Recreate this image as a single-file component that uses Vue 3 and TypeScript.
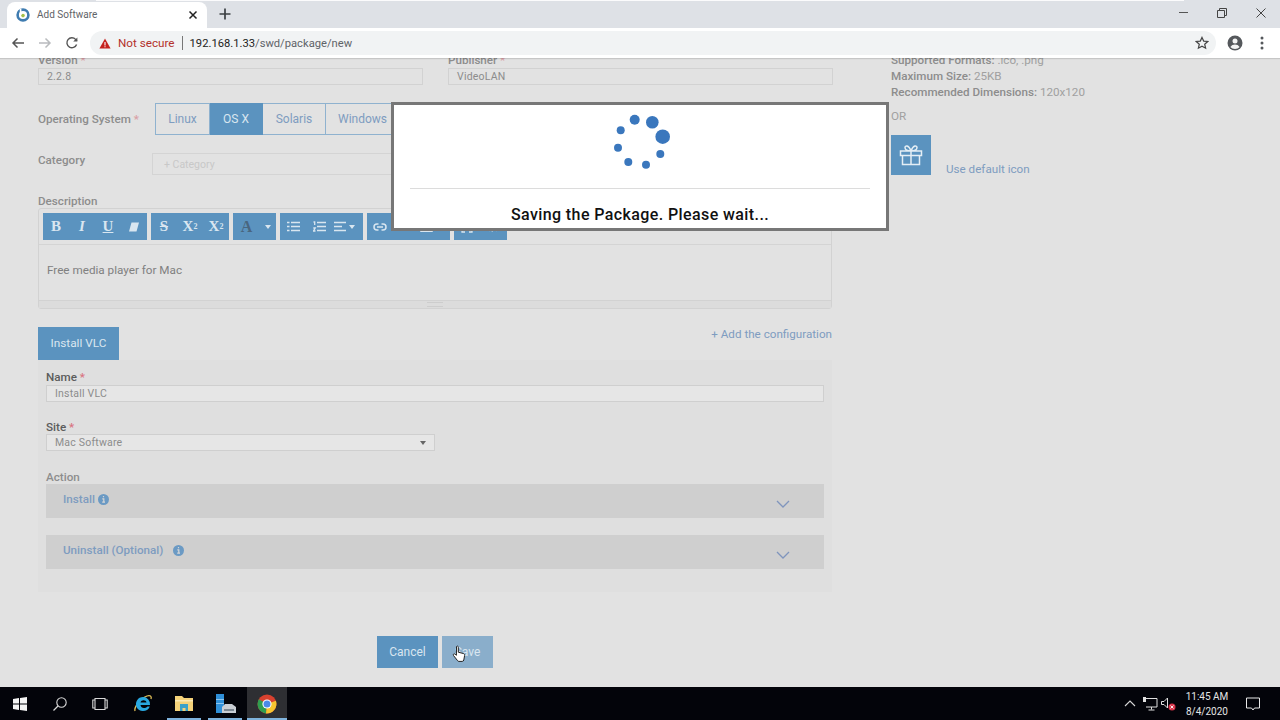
<script setup lang="ts">
const osOptions = [
  { name: "Linux", width: 55 },
  { name: "OS X", width: 53, active: true },
  { name: "Solaris", width: 63 },
  { name: "Windows", width: 74 },
  { name: "Others", width: 55 },
];

const actions = [
  { name: "Install", gap: "3px" },
  { name: "Uninstall (Optional)", gap: "10px" },
];

const spinnerDots = [
  { x: 634.7, y: 119.7, r: 5 },
  { x: 652.3, y: 122.3, r: 6.3 },
  { x: 662.7, y: 136.7, r: 7.3 },
  { x: 660.3, y: 154, r: 4 },
  { x: 646, y: 164.7, r: 4 },
  { x: 628.3, y: 162, r: 4 },
  { x: 618, y: 147.7, r: 4 },
  { x: 620.7, y: 130.3, r: 4 },
];
</script>

<template>
  <div class="screen">
    <header class="tabstrip">
      <div class="tab">
        <svg class="favicon" viewBox="0 0 14 14" width="14" height="14">
          <circle cx="7" cy="7" r="5.4" fill="none" stroke="#3f7cb0" stroke-width="2.6" />
          <circle cx="7" cy="7.6" r="1.8" fill="#a5c04a" />
          <path d="M4.6 1v6" stroke="#fff" stroke-width="1.6" />
        </svg>
        <span class="tab-title">Add Software</span>
        <svg class="tab-close" viewBox="0 0 10 10" width="10" height="10">
          <path d="M1.5 1.5l7 7M8.5 1.5l-7 7" stroke="#222" stroke-width="1.5" />
        </svg>
      </div>
      <svg class="new-tab" viewBox="0 0 12 12" width="12" height="12">
        <path d="M6 .5v11M.5 6h11" stroke="#3c4043" stroke-width="1.7" />
      </svg>
      <div class="window-buttons">
        <svg viewBox="0 0 12 12" width="12" height="12"><path d="M2 5.500h9" stroke="#555" /></svg>
        <svg viewBox="0 0 12 12" width="12" height="12">
          <path d="M1.5 3.5h7v7h-7zM3.5 3.5v-2h7v7h-2" fill="none" stroke="#444" />
        </svg>
        <svg viewBox="0 0 12 12" width="12" height="12"><path d="M1.5 1.5l9 9M10.5 1.5l-9 9" stroke="#444" /></svg>
      </div>
    </header>

    <nav class="addressbar">
      <svg viewBox="0 0 14 14" width="14" height="14">
        <path d="M13 7H2M6.5 2.5L2 7l4.5 4.5" fill="none" stroke="#555" stroke-width="1.5" />
      </svg>
      <svg viewBox="0 0 14 14" width="14" height="14">
        <path d="M1 7h11M7.5 2.5L12 7l-4.5 4.5" fill="none" stroke="#b9bbbe" stroke-width="1.5" />
      </svg>
      <svg viewBox="0 0 14 14" width="14" height="14">
        <path d="M11.6 8.5A5 5 0 1 1 10.6 3.4L12 4.8" fill="none" stroke="#555" stroke-width="1.4" />
        <path d="M12.4 1.4v4.2H8.2z" fill="#555" />
      </svg>
      <div class="omnibox">
        <svg viewBox="0 0 12 11" width="12" height="11">
          <path d="M6 .5l5.6 10H.4z" fill="#c5221f" />
          <path d="M6 4v3.4M6 8.2v1" stroke="#fff" stroke-width="1.1" />
        </svg>
        <span class="not-secure">Not secure</span>
        <span class="omni-sep"></span>
        <span class="url">192.168.1.33<span class="url-path">/swd/package/new</span></span>
        <svg class="star" viewBox="0 0 14 14" width="14" height="14">
          <path d="M7 1.4l1.7 3.7 4 .4-3 2.7.9 4L7 10.2l-3.6 2 .9-4-3-2.7 4-.4z" fill="none" stroke="#444" stroke-width="1.2" />
        </svg>
      </div>
      <svg class="account" viewBox="0 0 16 16" width="16" height="16">
        <circle cx="8" cy="8" r="7.5" fill="#55585c" />
        <circle cx="8" cy="6" r="2.5" fill="#f4f4f4" />
        <path d="M3.4 12c1-1.900 2.800-2.600 4.600-2.600s3.600.7 4.600 2.600C11.500 13.300 9.800 14 8 14s-3.500-.7-4.600-2z" fill="#f4f4f4" />
      </svg>
      <svg class="kebab" viewBox="0 0 4 14" width="4" height="14">
        <circle cx="2" cy="2" r="1.500" fill="#55585c" />
        <circle cx="2" cy="7" r="1.500" fill="#55585c" />
        <circle cx="2" cy="12" r="1.500" fill="#55585c" />
      </svg>
    </nav>

    <main class="page">
      <div class="content">
        <section class="form">
          <div class="two-cols">
            <div>
              <label class="label">Version <i>*</i></label>
              <div class="input">2.2.8</div>
            </div>
            <div>
              <label class="label">Publisher <i>*</i></label>
              <div class="input">VideoLAN</div>
            </div>
          </div>

          <div class="os-row">
            <label class="label os-label">Operating System <i>*</i></label>
            <div class="os-buttons">
              <span
                v-for="os in osOptions"
                :key="os.name"
                class="os-btn"
                :class="{ 'os-btn--active': os.active }"
                :style="{ width: os.width + 'px' }"
              >{{ os.name }}</span>
            </div>
          </div>

          <div class="category-row">
            <label class="label category-label">Category</label>
            <div class="category-input">+ Category</div>
          </div>

          <label class="label description-label">Description</label>
          <div class="editor">
            <div class="toolbar">
              <div class="tool-group">
                <span class="tool tool-text bold-serif">B</span>
                <span class="tool tool-text italic-serif">I</span>
                <span class="tool tool-text underline-serif">U</span>
                <span class="tool">
                  <svg viewBox="0 0 12 10" width="12" height="10"><path d="M3.500.5H11L8.500 9.500H1z" fill="#d9e6f0" /></svg>
                </span>
              </div>
              <div class="tool-group">
                <span class="tool tool-text strike-serif">S</span>
                <span class="tool tool-text bold-serif">X<sup>2</sup></span>
                <span class="tool tool-text bold-serif">X<sub>2</sub></span>
              </div>
              <div class="tool-group">
                <span class="tool tool-text bold-serif tool-a">A</span>
                <span class="tool tool-caret"><b class="caret"></b></span>
              </div>
              <div class="tool-group">
                <span class="tool">
                  <svg viewBox="0 0 13 11" width="13" height="11">
                    <path d="M0 1.500h2.500M0 5.500h2.500M0 9.500h2.500M4 1.500h9M4 5.500h9M4 9.500h9" stroke="#d9e6f0" stroke-width="1.700" />
                  </svg>
                </span>
                <span class="tool">
                  <svg viewBox="0 0 13 11" width="13" height="11">
                    <path d="M4 1.500h9M4 5.500h9M4 9.500h9M.5 1h1.200v3M.3 7h2L.5 10h2" fill="none" stroke="#d9e6f0" stroke-width="1.300" />
                  </svg>
                </span>
                <span class="tool tool-align">
                  <svg viewBox="0 0 12 11" width="12" height="11">
                    <path d="M0 1.500h12M0 5.500h8M0 9.500h12" stroke="#d9e6f0" stroke-width="1.700" />
                  </svg>
                  <b class="caret caret--small"></b>
                </span>
              </div>
              <div class="tool-group">
                <span class="tool">
                  <svg viewBox="0 0 14 8" width="14" height="8">
                    <path d="M5.500 1H4a3 3 0 0 0 0 6h1.500M8.500 1H10a3 3 0 0 1 0 6H8.500M4 4h6" fill="none" stroke="#d9e6f0" stroke-width="1.500" />
                  </svg>
                </span>
                <span class="tool tool--gap"></span>
                <span class="tool tool--table">
                  <svg viewBox="0 0 13 11" width="13" height="11">
                    <path d="M.5.5h12v10H.5zM.5 7h12M4.500 3v7.500M8.500 3v7.500" fill="none" stroke="#d9e6f0" />
                  </svg>
                </span>
              </div>
              <div class="tool-group tool-group--last">
                <span class="tool">
                  <svg viewBox="0 0 12 12" width="12" height="12">
                    <path d="M1 4V1h3M8 1h3v3M1 8v3h3M8 11h3V8" fill="none" stroke="#d9e6f0" stroke-width="1.300" />
                  </svg>
                </span>
                <span class="tool">
                  <svg viewBox="0 0 14 10" width="14" height="10">
                    <path d="M4 1L1 5l3 4M10 1l3 4-3 4M8 .5L6 9.500" fill="none" stroke="#d9e6f0" stroke-width="1.200" />
                  </svg>
                </span>
              </div>
            </div>
            <div class="editor-body">Free media player for Mac</div>
            <div class="editor-resize"><span></span></div>
          </div>

          <div class="config-head">
            <span class="config-tab">Install VLC</span>
            <a class="link add-config">+ Add the configuration</a>
          </div>

          <div class="config-panel">
            <label class="label label--dark">Name <i>*</i></label>
            <div class="input input--light">Install VLC</div>

            <label class="label label--dark site-label">Site <i>*</i></label>
            <div class="input input--light select">
              <span>Mac Software</span>
              <b class="caret caret--dark"></b>
            </div>

            <label class="label action-label">Action</label>
            <div v-for="action in actions" :key="action.name" class="action-bar">
              <span class="link action-name">{{ action.name }}</span>
              <svg
                class="info"
                :style="{ marginLeft: action.gap }"
                viewBox="0 0 11 11"
                width="11"
                height="11"
              >
                <circle cx="5.500" cy="5.500" r="5.500" fill="#6b9ac4" />
                <path d="M5.500 2v1.300M4.300 4.800h1.500v3M4.200 8.200h2.800" fill="none" stroke="#d6d6d6" stroke-width="1.200" />
              </svg>
              <svg class="chevron" viewBox="0 0 14 8" width="14" height="8">
                <path d="M1 1l6 6 6-6" fill="none" stroke="#7f95bd" stroke-width="1.300" />
              </svg>
            </div>
          </div>

          <div class="actions">
            <span class="btn btn-cancel">Cancel</span>
            <span class="btn btn-save">Save</span>
            <svg class="cursor" viewBox="0 0 14 17" width="14" height="17">
              <path d="M4.500 1.500c.8-.8 1.800-.3 1.800.7v5l5 1.300c1 .3 1.500 1 1.300 2l-.8 4.500c-.1.800-.8 1.400-1.600 1.400H7c-.6 0-1.100-.3-1.500-.8L1.500 10.500c-.8-1.200.6-2.200 1.600-1.300l1.300 1.100z" fill="#fff" stroke="#222" stroke-width="1" />
            </svg>
          </div>
        </section>

        <aside class="side">
          <p><b>Supported Formats:</b> .ico, .png</p>
          <p><b>Maximum Size:</b> 25KB</p>
          <p><b>Recommended Dimensions:</b> 120x120</p>
          <p class="or">OR</p>
          <div class="icon-row">
            <span class="gift">
              <svg viewBox="0 0 24 22" width="24" height="22">
                <path d="M1.500 7h21v4.500h-21zM3.500 11.500v9h17v-9M12 7v13.500M12 7C8 7 6 5.500 6 3.500S9.500 0.500 12 7c2.500-6.500 6-5.500 6-3.500S16 7 12 7z" fill="none" stroke="#e4eef5" stroke-width="1.500" />
              </svg>
            </span>
            <a class="link default-icon">Use default icon</a>
          </div>
        </aside>
      </div>

      <div class="modal">
        <svg class="spinner" viewBox="610 110 60 62" width="60" height="62">
          <circle v-for="(dot, i) in spinnerDots" :key="i" :cx="dot.x" :cy="dot.y" :r="dot.r" fill="#3a77bd" />
        </svg>
        <div class="modal-line"></div>
        <div class="modal-text">Saving the Package. Please wait...</div>
      </div>
    </main>

    <footer class="taskbar">
      <span class="task">
        <svg viewBox="0 0 14 14" width="14" height="14">
          <path d="M0 2l6-.9v5.500H0zM7 1l7-1v6.600H7zM0 7.400h6V13l-6-.9zM7 7.400h7V14l-7-1z" fill="#f4f4f4" />
        </svg>
      </span>
      <span class="task">
        <svg viewBox="0 0 16 16" width="16" height="16">
          <circle cx="9.500" cy="6.500" r="4.700" fill="none" stroke="#d8d8d8" stroke-width="1.100" />
          <path d="M6 10L1.500 14.500" stroke="#d8d8d8" stroke-width="1.300" />
        </svg>
      </span>
      <span class="task">
        <svg viewBox="0 0 16 14" width="16" height="14">
          <path d="M3 1.500h10v11H3zM3 3H.8v8H3M13 3h2.200v8H13" fill="none" stroke="#d8d8d8" stroke-width="1.100" />
        </svg>
      </span>
      <span class="task task--ie">
        <svg viewBox="0 0 20 20" width="20" height="20">
          <path d="M2 17C1 14 6 5 14 2c3-1 5 0 4 3" fill="none" stroke="#e4c25a" stroke-width="1.300" />
          <path d="M10 3a7 7 0 0 1 7 8H7.500c.3 3.500 4.500 4 7 1.500h2.300C15 18 6 19 3.500 13 1.500 8 5 3 10 3zM7.500 8.500h6c-.3-3-5.500-3-6 0z" fill="#29a9e1" />
        </svg>
      </span>
      <span class="task task--open">
        <svg viewBox="0 0 20 17" width="20" height="17">
          <path d="M1 1h7l2 2h9v13H1z" fill="#f4d27a" />
          <path d="M1 5h18v1.500H1z" fill="#fbe9b3" />
          <path d="M6 9h8v7h-2.500v-3h-3v3H6z" fill="#3ba1c8" />
        </svg>
      </span>
      <span class="task task--open">
        <svg viewBox="0 0 22 20" width="22" height="20">
          <path d="M2 0h8v19H2z" fill="#2f8fd8" />
          <path d="M2 5h8v1H2zM2 9h8v1H2z" fill="#8cc6ef" />
          <path d="M8 13l3-3h7l4 3v6H8z" fill="#c9ced4" />
          <path d="M10 15h10v2H10z" fill="#7c8791" />
        </svg>
      </span>
      <span class="task task--open task--active">
        <svg viewBox="0 0 20 20" width="20" height="20">
          <circle cx="10" cy="10" r="9.500" fill="#d8412f" />
          <path d="M10 10L1.800 5.200A9.500 9.500 0 0 0 9 19.400z" fill="#2f9e4f" />
          <path d="M10 10l8.900-3.200A9.500 9.500 0 0 1 9 19.400z" fill="#f6c531" />
          <circle cx="10" cy="10" r="4.600" fill="#fff" />
          <circle cx="10" cy="10" r="3.500" fill="#4a8ae8" />
        </svg>
      </span>

      <div class="tray">
        <span class="tray-item">
          <svg viewBox="0 0 12 7" width="12" height="7"><path d="M1 6l5-5 5 5" fill="none" stroke="#d8d8d8" stroke-width="1.100" /></svg>
        </span>
        <span class="tray-item">
          <svg viewBox="0 0 15 14" width="15" height="14">
            <path d="M3 1.500h11v8.500H3M8.500 10v2.500M5.500 13h6" fill="none" stroke="#e0e0e0" stroke-width="1" />
            <path d="M0 0h3v5H0z" fill="#e0e0e0" />
          </svg>
        </span>
        <span class="tray-item tray-item--sound">
          <svg viewBox="0 0 16 14" width="16" height="14">
            <path d="M.5 4.500h2.500L6.500 1v10L3 7.500H.5z" fill="none" stroke="#e0e0e0" stroke-width="1" />
            <circle cx="11" cy="10" r="3.500" fill="#d8344a" />
            <path d="M9.500 8.500l3 3M12.500 8.500l-3 3" stroke="#fff" stroke-width=".9" />
          </svg>
        </span>
        <span class="clock">11:45 AM<br />8/4/2020</span>
        <span class="tray-item tray-item--notify">
          <svg viewBox="0 0 14 14" width="14" height="14">
            <path d="M.5 1h13v10H8.500L7 13l-1.500-2h-5z" fill="none" stroke="#e8e8e8" stroke-width="1" />
          </svg>
        </span>
      </div>
    </footer>
  </div>
</template>

<style>
html,
body {
  margin: 0;
  background: #e2e2e2;
}
</style>

<style scoped>
.screen {
  width: 1280px;
  height: 720px;
  display: flex;
  flex-direction: column;
  overflow: hidden;
  font-family: Roboto, "Liberation Sans", sans-serif;
  font-size: 11.650px;
}

/* browser chrome */
.tabstrip {
  position: relative;
  height: 28px;
  flex: none;
  display: flex;
  align-items: center;
  background: #dee1e6;
}

.tabstrip::before {
  content: "";
  position: absolute;
  top: 0;
  left: 96px;
  width: 1088px;
  height: 1px;
  background: #fbfbfc;
}

.tab {
  position: relative;
  width: 200px;
  height: 26px;
  margin: 2px 0 0 7px;
  padding: 0 9px;
  box-sizing: border-box;
  display: flex;
  align-items: center;
  background: #fff;
  border-radius: 8px 8px 0 0;
}

.tab-title {
  margin-left: 7px;
  margin-top: -2px;
  color: #5f6368;
  font-size: 10px;
  flex: 1;
}

.new-tab {
  margin-left: 12px;
}

.window-buttons {
  margin-left: auto;
  margin-right: 13px;
  display: flex;
  gap: 27px;
  margin-top: -3px;
}

.addressbar {
  height: 30px;
  flex: none;
  display: flex;
  align-items: center;
  background: #fff;
  padding-left: 11px;
  box-sizing: border-box;
  gap: 13px;
  box-shadow: 0 1px 1px rgba(0, 0, 0, 0.12);
  position: relative;
  z-index: 2;
}

.omnibox {
  width: 1126px;
  height: 24px;
  margin-left: -2px;
  padding: 0 7px 0 9px;
  box-sizing: border-box;
  display: flex;
  align-items: center;
  background: #f1f3f4;
  border-radius: 12px;
}

.not-secure {
  margin-left: 7px;
  color: #b3312c;
  font-size: 11.700px;
}

.omni-sep {
  width: 1px;
  height: 14px;
  margin: 0 7px;
  background: #777;
}

.url {
  color: #222;
  font-size: 11.200px;
}

.url-path {
  color: #5f6368;
}

.star {
  margin-left: auto;
}

.account {
  margin-left: -2px;
}

.kebab {
  margin-left: 4px;
}

/* page */
.page {
  position: relative;
  flex: 1;
  min-height: 0;
  overflow: hidden;
  background: #e2e2e2;
}

.content {
  display: grid;
  grid-template-columns: 794px 300px;
  column-gap: 59px;
  padding-left: 38px;
  margin-top: -5px;
}

.label {
  display: block;
  height: 14px;
  line-height: 14px;
  color: #8d8d8d;
  font-weight: 500;
}

.label i {
  color: #d9a0a6;
  font-style: normal;
}

.label--dark {
  color: #5c5c5c;
}

.label--dark i {
  color: #d9737f;
}

.input {
  height: 17px;
  line-height: 15px;
  box-sizing: border-box;
  margin-top: 1px;
  padding: 0 8px;
  border: 1px solid #d2d2d2;
  color: #8c8c8c;
  font-size: 10.500px;
  letter-spacing: 0.2px;
}

.input--light {
  background: #e6e6e6;
  border-color: #cfcfcf;
}

.two-cols {
  display: grid;
  grid-template-columns: 385px 385px;
  column-gap: 25px;
}

.os-row {
  display: flex;
  align-items: center;
  margin-top: 18px;
}

.os-label {
  width: 117px;
}

.os-buttons {
  display: flex;
}

.os-btn {
  height: 32px;
  line-height: 30px;
  box-sizing: border-box;
  text-align: center;
  border: 1px solid #8fb2cf;
  color: #7e9cc0;
  font-size: 12px;
}

.os-btn + .os-btn {
  border-left: 0;
}

.os-btn--active {
  background: #5b93bf;
  border-color: #5b93bf;
  color: #d9e6f0;
}

.category-row {
  display: flex;
  margin-top: 18px;
  height: 22px;
}

.category-label {
  width: 114px;
}

.category-input {
  flex: 1;
  line-height: 21px;
  padding-left: 11px;
  border: 1px solid #d4d4d4;
  color: #c8c8c8;
  font-size: 10.500px;
}

.description-label {
  margin-top: 19px;
}

.editor {
  height: 101px;
  box-sizing: border-box;
  display: flex;
  flex-direction: column;
  border: 1px solid #d2d2d2;
  border-radius: 3px;
}

.toolbar {
  height: 36px;
  flex: none;
  box-sizing: border-box;
  padding: 4px 0 0 4px;
  display: flex;
  gap: 4px;
  border-bottom: 1px solid #d4d4d4;
}

.tool-group {
  height: 27px;
  display: flex;
  align-items: center;
  background: #5b93bf;
}

.tool-group--last {
  width: 53px;
}

.tool {
  width: 26px;
  height: 27px;
  flex: none;
  display: flex;
  align-items: center;
  justify-content: center;
  color: #d9e6f0;
}

.tool--gap {
  width: 20px;
}

.tool--table {
  width: 37px;
  justify-content: flex-start;
  padding-left: 7px;
  box-sizing: border-box;
}

.tool-text {
  font-family: "Liberation Serif", serif;
  font-size: 15px;
}

.tool-text sup,
.tool-text sub {
  font-size: 8px;
  line-height: 0;
}

.bold-serif {
  font-weight: 700;
}

.italic-serif {
  font-style: italic;
  font-weight: 700;
}

.underline-serif {
  font-weight: 700;
  text-decoration: underline;
}

.strike-serif {
  font-weight: 700;
  text-decoration: line-through;
}

.tool-a {
  width: 27px;
  color: #49667f;
  font-size: 16px;
}

.tool-caret {
  width: 16px;
}

.tool-align {
  width: 31px;
  box-sizing: border-box;
  justify-content: flex-start;
  padding-left: 2px;
  gap: 3px;
}

.caret {
  width: 0;
  height: 0;
  border-left: 3.500px solid transparent;
  border-right: 3.500px solid transparent;
  border-top: 4px solid #d9e6f0;
}

.caret--small {
  border-left-width: 3px;
  border-right-width: 3px;
}

.caret--dark {
  margin-left: auto;
  border-top-color: #666;
}

.editor-body {
  flex: 1;
  padding: 18px 8px 0;
  color: #808080;
  font-size: 11.700px;
}

.editor-resize {
  height: 7px;
  display: flex;
  justify-content: center;
  align-items: center;
  background: #dcdcdc;
  border-top: 1px solid #d2d2d2;
}

.editor-resize span {
  width: 16px;
  height: 3px;
  border-top: 1px solid #cdcdcd;
  border-bottom: 1px solid #cdcdcd;
}

.config-head {
  display: flex;
  justify-content: space-between;
  margin-top: 18px;
  height: 33px;
}

.config-tab {
  width: 81px;
  line-height: 32px;
  text-align: center;
  background: #5b93bf;
  color: #d9e6f0;
  font-size: 11.800px;
}

.link {
  color: #7e9cc0;
}

.add-config {
  line-height: 14px;
}

.config-panel {
  height: 232px;
  box-sizing: border-box;
  padding: 10px 8px 0;
  background: #dfdfdf;
}

.site-label {
  margin-top: 18px;
}

.config-panel .site-label + .input {
  margin-top: 0;
}

.select {
  width: 389px;
  display: flex;
  align-items: center;
}

.action-label {
  margin-top: 19px;
}

.action-bar {
  height: 34px;
  display: flex;
  align-items: flex-start;
  padding: 8px 34px 0 17px;
  box-sizing: border-box;
  background: #cfcfcf;
  margin-bottom: 17px;
}

.action-name {
  font-weight: 500;
  line-height: 14px;
}

.info {
  margin-top: 1.500px;
}

.chevron {
  margin-left: auto;
  margin-top: 8px;
}

.actions {
  position: relative;
  display: flex;
  justify-content: center;
  gap: 4px;
  margin-top: 44px;
}

.btn {
  height: 32px;
  line-height: 32px;
  text-align: center;
  color: #d9e6f0;
  font-size: 12px;
}

.btn-cancel {
  width: 61px;
  background: #5b93bf;
}

.btn-save {
  width: 51px;
  background: #8aaecb;
}

.cursor {
  position: absolute;
  left: 414px;
  top: 9px;
}

.side {
  margin-top: -1px;
  color: #a0a0a0;
  line-height: 16px;
}

.side p {
  margin: 0;
}

.side b {
  color: #8d8d8d;
  font-weight: 500;
}

.side .or {
  margin-top: 8px;
}

.icon-row {
  display: flex;
  align-items: flex-end;
  margin-top: 11px;
}

.gift {
  width: 40px;
  height: 40px;
  display: flex;
  align-items: center;
  justify-content: center;
  background: #5b93bf;
}

.default-icon {
  margin-left: 15px;
  line-height: 14px;
  margin-bottom: -1px;
}

/* saving dialog, sits over the form */
.modal {
  position: absolute;
  left: 391px;
  top: 44px;
  width: 498px;
  height: 129px;
  box-sizing: border-box;
  display: flex;
  flex-direction: column;
  align-items: center;
  background: #fff;
  border: 3px solid #777;
}

.spinner {
  margin-top: 5px;
  flex: none;
}

.modal-line {
  width: 460px;
  height: 1px;
  margin-top: 16px;
  background: #dcdcdc;
}

.modal-text {
  margin-top: 17px;
  color: #111;
  font-size: 16px;
  line-height: 18px;
  font-weight: 500;
  letter-spacing: 0.4px;
}

/* windows taskbar */
.taskbar {
  height: 33px;
  flex: none;
  display: flex;
  align-items: stretch;
  background: #03040a;
}

.task {
  width: 40px;
  display: flex;
  align-items: center;
  justify-content: center;
  box-sizing: border-box;
}

.task--ie {
  margin-left: 3px;
}

.task--open {
  position: relative;
  margin-left: 1px;
}

.task--open::after {
  content: "";
  position: absolute;
  left: 3px;
  right: 3px;
  bottom: 0;
  height: 2px;
  background: #7fb3dd;
}

.task--active {
  background: #2e2f33;
  margin-left: 2px;
}

.task--active::after {
  left: 0;
  right: 0;
}

.tray {
  margin-left: auto;
  display: flex;
  align-items: center;
  color: #e4e4e4;
}

.tray-item {
  width: 20px;
  display: flex;
  justify-content: center;
}

.tray-item--sound {
  width: 18px;
}

.clock {
  width: 58px;
  text-align: center;
  font-size: 10px;
  line-height: 15px;
}

.tray-item--notify {
  width: 34px;
  margin-right: 10px;
}
</style>
